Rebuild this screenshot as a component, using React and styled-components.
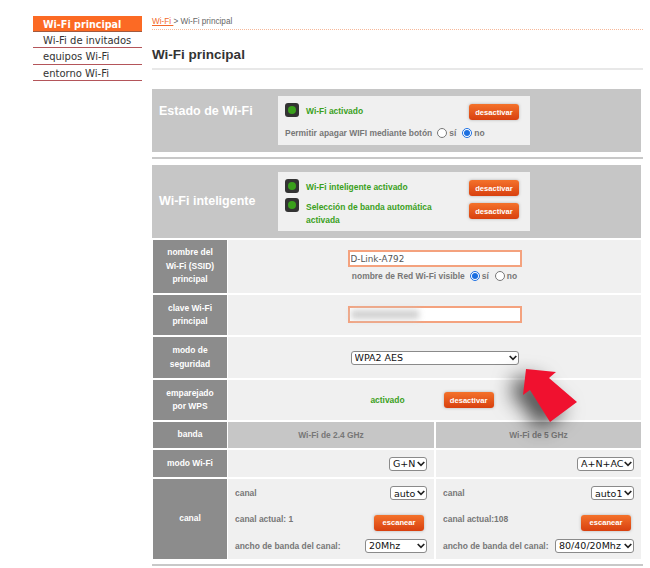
import React from "react";
import styled, { createGlobalStyle } from "styled-components";

const GlobalStyle = createGlobalStyle`
html, body {
  margin: 0;
  background: #fff;
}
* {
  box-sizing: border-box;
}
`

const chevron = "url(\"data:image/svg+xml,%3Csvg xmlns='http://www.w3.org/2000/svg' width='8' height='6' viewBox='0 0 8 6'%3E%3Cpath d='M.7 1l3.3 3.3L7.3 1' fill='none' stroke='%23222' stroke-width='1.7'/%3E%3C/svg%3E\")";

const Page = styled.div`
position: relative;
display: flex;
width: 650px;
height: 568px;
padding-left: 33px;
overflow: hidden;
font-family: "Liberation Sans", Arial, sans-serif;
`

const Sidebar = styled.nav`
flex: none;
width: 109px;
margin-top: 16px;
font-family: "DejaVu Sans", Verdana, sans-serif;
font-size: 10px;
`

const SideItem = styled.a`
display: block;
height: ${props => props.active ? 16 : 16.3}px;
padding: 1px 0 0 10px;
line-height: 15px;
color: ${props => props.active ? '#fff' : '#333'};
background: ${props => props.active ? '#fc6a24' : 'transparent'};
font-size: ${props => props.active ? 9.6 : 10}px;
font-weight: ${props => props.active ? 'bold' : 'normal'};
border-bottom: 1px solid ${props => props.active ? '#a05a40' : '#b4555a'};
`

const Main = styled.main`
flex: none;
width: 491px;
margin-left: 10px;
`

const Breadcrumb = styled.div`
height: 15px;
margin-top: 15px;
font-size: 8.2px;
line-height: 14px;
color: #666;
border-bottom: 1px dotted #f7b899;

a {
  color: #f2692a;
  text-decoration: underline;
}
`

const PageTitle = styled.h1`
height: 40px;
margin: 0;
padding-top: 16px;
font-size: 13.5px;
line-height: 18px;
color: #333;
border-bottom: 2px solid #e8e8e8;
`

const Section = styled.section`
display: flex;
height: ${props => props.height}px;
margin-top: ${props => props.top}px;
padding: 7px 0;
width: 489px;
background: #c6c6c6;
`

const SectionTitle = styled.h2`
flex: none;
width: 126px;
margin: 0;
padding-left: 7px;
align-self: center;
font-size: 12.5px;
line-height: 18px;
color: #fff;
transform: translateY(${props => props.shift || 0}px);
`

const StatusBox = styled.div`
display: grid;
grid-template-columns: 14px 1fr 50px;
gap: 2px 7px;
align-content: start;
width: 252px;
padding: 7px 11px 0 7px;
background: #f0f0f0;
`

const Led = styled.span`
display: flex;
align-items: center;
justify-content: center;
width: 14px;
height: 14px;
border-radius: 3px;
background: #333;

&::after {
  content: "";
  width: 8px;
  height: 8px;
  border-radius: 50%;
  background: #3aa01c;
}
`

const StatusText = styled.span`
font-size: 8.45px;
font-weight: bold;
line-height: 13px;
color: #3aa01c;
padding-top: ${props => props.pad || 0}px;
`

const Button = styled.button`
flex: none;
width: 50px;
height: 16px;
padding: 0;
border: 0;
border-radius: 3px;
background: linear-gradient(#f4722b, #d8400f);
box-shadow: 0 0 3px rgba(120, 120, 120, 0.55);
font-family: inherit;
font-size: 7.6px;
font-weight: bold;
color: #fff;
margin-top: ${props => props.top || 0}px;
margin-right: ${props => props.right || 0}px;
`

const Muted = styled.span`
font-size: 8.45px;
font-weight: bold;
color: #777;
`

const SwitchRow = styled.div`
grid-column: 1 / -1;
display: flex;
align-items: center;
gap: 2px;
margin-top: ${props => props.top}px;
`

const Radio = styled.input.attrs({ type: "radio" })`
width: 10px;
height: 10px;
margin: 0 0 0 ${props => props.gap || 0}px;
accent-color: #1c6fe0;
`

const Divider = styled.div`
width: 491px;
height: 2px;
margin-top: ${props => props.top}px;
background: #c8c8c8;
`

const Settings = styled.div`
display: grid;
grid-template-columns: 74px 206px 206px;
grid-template-rows: 53px 40px 41px 40px 26px 27px 80px;
gap: 2px 1px;
width: 489px;
margin-top: 2px;
padding-left: 1px;
`

const Label = styled.div`
display: flex;
align-items: center;
justify-content: center;
padding: 0 10px;
background: #8c8c8c;
font-size: 8.45px;
font-weight: bold;
line-height: 13.4px;
color: #fff;
text-align: center;
`

const Cell = styled.div`
display: flex;
flex-direction: column;
align-items: center;
justify-content: ${props => props.top ? 'flex-start' : 'center'};
grid-column: 2 / 4;
padding-top: ${props => props.top || 0}px;
background: #f0f0f0;
`

const InlineRow = styled.div`
display: flex;
align-items: center;
gap: 39px;
padding-right: 5px;
`

const Band = styled.div`
display: flex;
align-items: center;
justify-content: center;
margin-left: ${props => props.last ? 1 : 0}px;
background: #c6c6c6;
font-size: 8.4px;
font-weight: bold;
color: #777;
`

const ModeCell = styled.div`
display: flex;
align-items: center;
justify-content: flex-end;
margin-left: ${props => props.last ? 1 : 0}px;
padding-right: 7px;
background: #f0f0f0;
`

const TextBox = styled.input`
display: block;
width: 174px;
height: 17px;
padding: 0 1px;
border: 2px solid #f4a27e;
outline: none;
background: #fff;
font-family: "DejaVu Sans", Verdana, sans-serif;
font-size: 8.8px;
color: #555;
`

const SecretBox = styled.div`
width: 174px;
height: 17px;
padding: 2px 1px;
border: 2px solid #f4a27e;
background: #fff;
`

const Secret = styled.span`
display: block;
width: 68px;
height: 9px;
background: #cfcfcf;
filter: blur(3px);
`

const Select = styled.select`
appearance: none;
width: ${props => props.width}px;
height: 14px;
padding: 0 0 0 3px;
border: 1px solid #8a8a8a;
border-radius: 3px;
background: #fff ${chevron} no-repeat right 1px center;
font-family: "DejaVu Sans", Verdana, sans-serif;
font-size: 9.5px;
color: #111;
`

const ChannelCell = styled.div`
display: grid;
grid-template-rows: repeat(3, 1fr);
margin-left: ${props => props.last ? 1 : 0}px;
padding: 1px 7px 0;
background: #f0f0f0;
`

const ChannelRow = styled.div`
display: flex;
align-items: center;
justify-content: space-between;
`

const Arrow = styled.svg`
position: absolute;
left: 490px;
top: 340px;
filter: drop-shadow(-11px 8px 10px rgba(0, 0, 0, 0.7));
`

const Channel = ({ current, auto, width, bandwidth, last }) => (
    <ChannelCell last={last}>
        <ChannelRow>
            <Muted>canal</Muted>
            <Select width={auto === "auto" ? 37 : 43} defaultValue={auto}>
                <option>{auto}</option>
            </Select>
        </ChannelRow>
        <ChannelRow>
            <Muted>{current}</Muted>
            <Button top={7} right={3}>escanear</Button>
        </ChannelRow>
        <ChannelRow>
            <Muted>ancho de banda del canal:</Muted>
            <Select width={width} defaultValue={bandwidth}>
                <option>{bandwidth}</option>
            </Select>
        </ChannelRow>
    </ChannelCell>
)

const App = () => {
    return (
        <Page>
            <GlobalStyle/>
            <Sidebar>
                <SideItem active>Wi-Fi principal</SideItem>
                <SideItem>Wi-Fi de invitados</SideItem>
                <SideItem>equipos Wi-Fi</SideItem>
                <SideItem>entorno Wi-Fi</SideItem>
            </Sidebar>
            <Main>
                <Breadcrumb><a>Wi-Fi </a>&gt; Wi-Fi principal</Breadcrumb>
                <PageTitle>Wi-Fi principal</PageTitle>

                <Section height={63} top={19}>
                    <SectionTitle shift={-10}>Estado de Wi-Fi</SectionTitle>
                    <StatusBox>
                        <Led/>
                        <StatusText pad={2}>Wi-Fi activado</StatusText>
                        <Button top={1}>desactivar</Button>
                        <SwitchRow top={6}>
                            <Muted>Permitir apagar WIFI mediante botón</Muted>
                            <Radio name="button" gap={3}/>
                            <Muted>sí</Muted>
                            <Radio name="button" gap={4} defaultChecked/>
                            <Muted>no</Muted>
                        </SwitchRow>
                    </StatusBox>
                </Section>
                <Divider top={5}/>

                <Section height={73} top={6}>
                    <SectionTitle shift={-1}>Wi-Fi inteligente</SectionTitle>
                    <StatusBox>
                        <Led/>
                        <StatusText pad={2}>Wi-Fi inteligente activado</StatusText>
                        <Button top={1}>desactivar</Button>
                        <Led/>
                        <StatusText pad={3}>Selección de banda automática activada</StatusText>
                        <Button top={5}>desactivar</Button>
                    </StatusBox>
                </Section>

                <Settings>
                    <Label>nombre del Wi-Fi (SSID) principal</Label>
                    <Cell top={10}>
                        <TextBox defaultValue="D-Link-A792"/>
                        <SwitchRow top={4}>
                            <Muted>nombre de Red Wi-Fi visible</Muted>
                            <Radio name="ssid" gap={3} defaultChecked/>
                            <Muted>sí</Muted>
                            <Radio name="ssid" gap={4}/>
                            <Muted>no</Muted>
                        </SwitchRow>
                    </Cell>

                    <Label>clave Wi-Fi principal</Label>
                    <Cell top={11}>
                        <SecretBox><Secret/></SecretBox>
                    </Cell>

                    <Label>modo de seguridad</Label>
                    <Cell>
                        <Select width={168} defaultValue="WPA2 AES">
                            <option>WPA2 AES</option>
                        </Select>
                    </Cell>

                    <Label>emparejado por WPS</Label>
                    <Cell>
                        <InlineRow>
                            <StatusText>activado</StatusText>
                            <Button>desactivar</Button>
                        </InlineRow>
                    </Cell>

                    <Label>banda</Label>
                    <Band>Wi-Fi de 2.4 GHz</Band>
                    <Band last>Wi-Fi de 5 GHz</Band>

                    <Label>modo Wi-Fi</Label>
                    <ModeCell>
                        <Select width={38} defaultValue="G+N">
                            <option>G+N</option>
                        </Select>
                    </ModeCell>
                    <ModeCell last>
                        <Select width={57} defaultValue="A+N+AC">
                            <option>A+N+AC</option>
                        </Select>
                    </ModeCell>

                    <Label>canal</Label>
                    <Channel current="canal actual: 1" auto="auto" width={62} bandwidth="20Mhz"/>
                    <Channel last current="canal actual:108" auto="auto1" width={79} bandwidth="80/40/20Mhz"/>
                </Settings>
                <Divider top={5}/>
            </Main>
            <Arrow width="100" height="100" viewBox="490 340 100 100">
                <path d="M526 369L556 372L549 378L577 402L550 422L530 390L523 395Z" fill="#f0112f"/>
            </Arrow>
        </Page>
    )
}

export default App;
